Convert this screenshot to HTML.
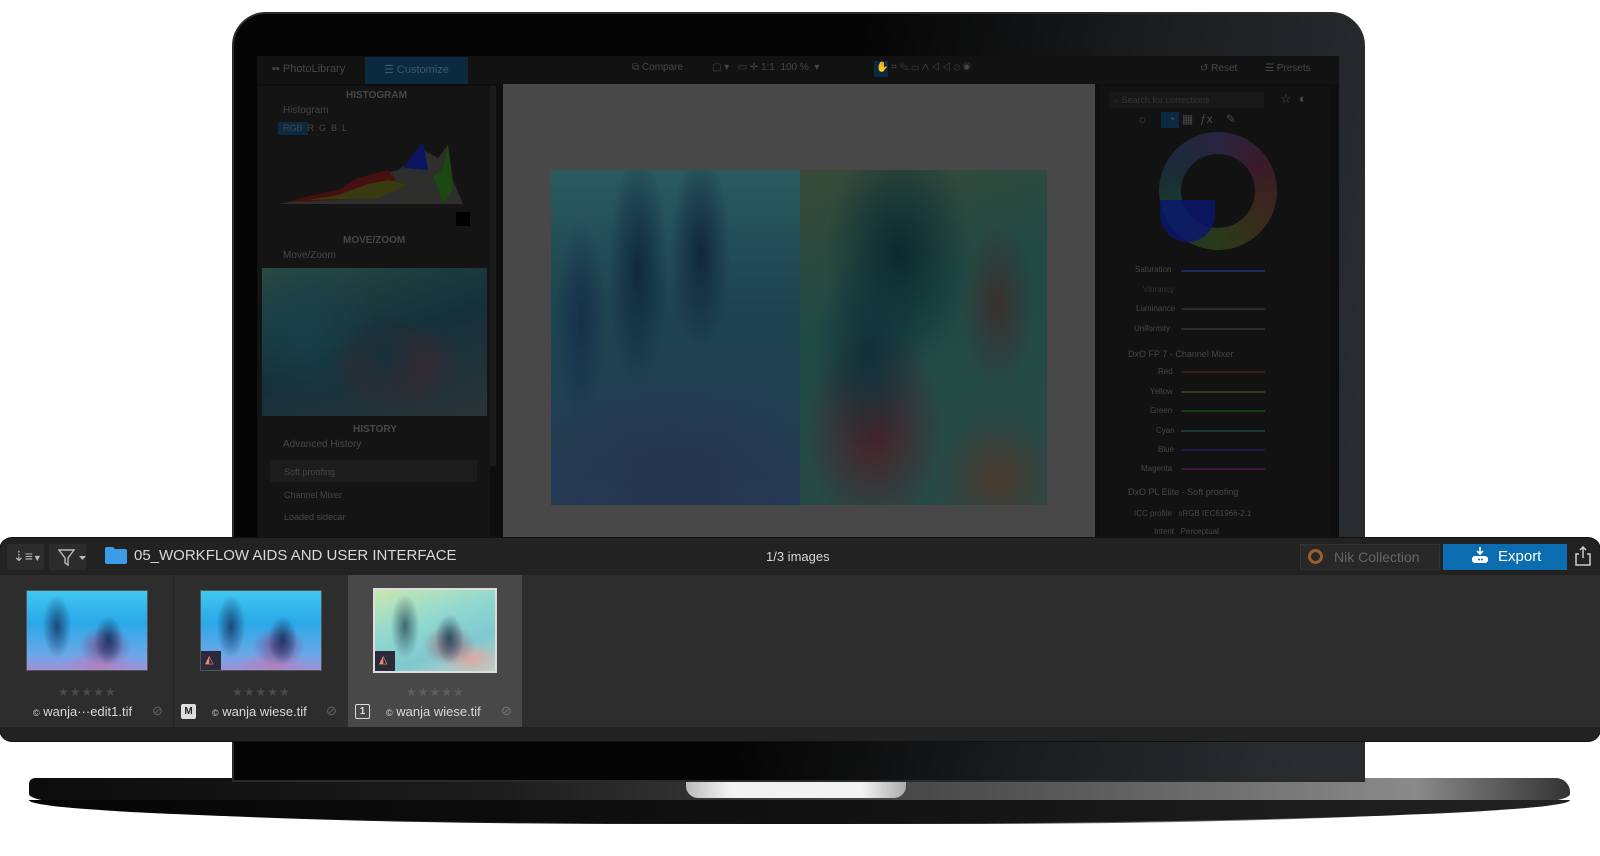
<!DOCTYPE html>
<html><head><meta charset="utf-8"><style>
*{margin:0;padding:0;box-sizing:border-box}
body{width:1600px;height:856px;background:#fff;position:relative;overflow:hidden;font-family:"Liberation Sans",sans-serif}
.abs{position:absolute}
.t{position:absolute;color:#474747;font-size:10px;white-space:nowrap}
</style></head><body>

<!-- base -->
<div class="abs" style="left:29px;top:778px;width:1541px;height:46px;border-radius:6px 14px 40% 40%/6px 14px 30px 30px;background:linear-gradient(90deg,#0c0c0c 0%,#1c1c1c 30%,#555 65%,#8a8a8a 90%,#333 100%)"></div>
<div class="abs" style="left:29px;top:800px;width:1541px;height:24px;border-radius:0 0 50% 50%/0 0 24px 24px;background:linear-gradient(90deg,#050505,#111 50%,#222)"></div>
<div class="abs" style="left:686px;top:778px;width:220px;height:20px;border-radius:0 0 12px 12px;background:linear-gradient(90deg,#bbb,#f2f2f2 20%,#f2f2f2 80%,#aaa)"></div>

<!-- lid -->
<div class="abs" style="left:232px;top:12px;width:1133px;height:770px;border-radius:34px 34px 0 0;background:linear-gradient(100deg,#050505 50%,#1c1e20 75%,#2a2d30 95%);border:2px solid #2a2a2a"></div>
<div class="abs" style="left:257px;top:56px;width:1082px;height:484px;background:#0e0e0e"></div>

<!-- toolbar -->
<div class="abs" style="left:257px;top:56px;width:1082px;height:28px;background:#121212"></div>
<div class="abs" style="left:365px;top:57px;width:103px;height:27px;background:#0b2a40"></div>
<div class="t" style="left:272px;top:63px;font-size:11px">▪▪ PhotoLibrary</div>
<div class="t" style="left:384px;top:63px;font-size:11px;color:#3c5a70">☰ Customize</div>
<div class="t" style="left:632px;top:62px">⧉ Compare</div>
<div class="t" style="left:712px;top:62px">▢ ▾ &nbsp; ▭ ✛ 1:1 &nbsp;100 % &nbsp;▾</div>
<div class="abs" style="left:874px;top:61px;width:14px;height:16px;background:#0b2a40"></div>
<div class="t" style="left:876px;top:62px">✋ ⌗ ✎ ▭ ⋀ ◁ ◁ ⊘ ◉</div>
<div class="t" style="left:1200px;top:63px">↺ Reset</div>
<div class="t" style="left:1265px;top:63px">☰ Presets</div>

<!-- left panel -->
<div class="abs" style="left:258px;top:86px;width:232px;height:454px;background:#141414"></div>
<div class="abs" style="left:490px;top:86px;width:6px;height:380px;background:#1b1b1b"></div>
<div class="t" style="left:346px;top:90px;font-weight:bold">HISTOGRAM</div>
<div class="t" style="left:283px;top:105px">Histogram</div>
<div class="abs" style="left:278px;top:122px;width:30px;height:13px;background:#0b2a40"></div>
<div class="t" style="left:283px;top:123px;font-size:9px">RGB &nbsp;R &nbsp;G &nbsp;B &nbsp;L</div>
<svg class="abs" style="left:278px;top:140px" width="190" height="65"><polygon points="0,64 30,58 60,52 80,40 100,35 120,30 135,20 145,10 160,18 170,5 175,40 185,64" fill="#2e2e2c"/><polygon points="10,62 30,56 60,50 80,38 95,34 110,30 118,40 60,60" fill="#451010"/><polygon points="30,60 60,55 90,44 110,40 130,45 100,58" fill="#3a3a10"/><polygon points="125,28 135,15 145,2 150,30" fill="#0a1460"/><polygon points="155,35 165,30 170,5 175,50 165,62" fill="#1a4a10"/></svg>
<div class="abs" style="left:456px;top:212px;width:14px;height:14px;background:#000"></div>
<div class="t" style="left:343px;top:235px;font-weight:bold">MOVE/ZOOM</div>
<div class="t" style="left:283px;top:250px">Move/Zoom</div>
<div class="abs" style="left:262px;top:268px;width:225px;height:148px;background:radial-gradient(ellipse 18% 30% at 55% 60%,#15303a,transparent),radial-gradient(ellipse 30% 30% at 60% 65%,#40252c,transparent),radial-gradient(ellipse 30% 50% at 20% 40%,#18404a,transparent),linear-gradient(160deg,#2a4a44,#14303a 50%,#2a3438)"></div>
<div class="t" style="left:353px;top:424px;font-weight:bold">HISTORY</div>
<div class="t" style="left:283px;top:439px">Advanced History</div>
<div class="abs" style="left:270px;top:460px;width:207px;height:22px;background:#1c1c1c"></div>
<div class="t" style="left:284px;top:467px;font-size:9px">Soft proofing</div>
<div class="t" style="left:284px;top:490px;font-size:9px">Channel Mixer</div>
<div class="t" style="left:284px;top:512px;font-size:9px">Loaded sidecar</div>

<!-- center -->
<div class="abs" style="left:503px;top:84px;width:592px;height:456px;background:#484848"></div>
<div class="abs" style="left:551px;top:170px;width:249px;height:335px;background:radial-gradient(ellipse 12% 35% at 35% 30%,#0f2a3a,transparent),radial-gradient(ellipse 12% 30% at 60% 25%,#10283a,transparent),radial-gradient(ellipse 10% 30% at 12% 45%,#15304a,transparent),radial-gradient(ellipse 60% 30% at 50% 90%,#28344e,transparent),linear-gradient(180deg,#2a5a60,#1e4450 40%,#243a55)"></div>
<div class="abs" style="left:800px;top:170px;width:247px;height:335px;background:radial-gradient(ellipse 22% 30% at 28% 55%,#10303a,transparent),radial-gradient(ellipse 28% 30% at 30% 78%,#4a2028,transparent),radial-gradient(ellipse 25% 20% at 80% 92%,#4a3a30,transparent),radial-gradient(ellipse 30% 35% at 40% 25%,#0a2a30,transparent),radial-gradient(ellipse 15% 25% at 80% 40%,#3a3030,transparent),linear-gradient(160deg,#3a4a38,#204a44 40%,#2a4a48)"></div>

<!-- right panel -->
<div class="abs" style="left:1100px;top:86px;width:230px;height:454px;background:#121212"></div>
<div class="abs" style="left:1109px;top:92px;width:155px;height:16px;background:#181818"></div>
<div class="t" style="left:1114px;top:95px;font-size:9px;color:#333">⌕ Search for corrections</div>
<div class="t" style="left:1280px;top:91px;font-size:13px">☆ &nbsp;◐</div>
<div class="abs" style="left:1161px;top:112px;width:18px;height:16px;background:#0b2a40"></div>
<div class="t" style="left:1137px;top:112px;font-size:12px">☼ &nbsp; &nbsp; &nbsp;◔ &nbsp;▦ &nbsp;ƒx &nbsp; &nbsp;✎</div>
<div class="abs" style="left:1159px;top:132px;width:118px;height:118px;border-radius:50%;background:conic-gradient(#2a2440,#3a1a2a,#3a2a1a,#2a3a1a,#1a3a2a,#1a2a3a,#2a2440)"></div>
<div class="abs" style="left:1181px;top:154px;width:74px;height:74px;border-radius:50%;background:#121212"></div>
<div class="abs" style="left:1160px;top:200px;width:55px;height:42px;border-radius:0 0 40px 40px;background:#0a1670;opacity:.8"></div>
<div class="t" style="left:1135px;top:265px;font-size:8px">Saturation</div>
<div class="abs" style="left:1181px;top:270px;width:84px;height:2px;background:#1a2a5a"></div>
<div class="t" style="left:1143px;top:285px;font-size:8px;color:#333">Vibrancy</div>
<div class="t" style="left:1136px;top:304px;font-size:8px">Luminance</div>
<div class="abs" style="left:1181px;top:308px;width:84px;height:2px;background:#2a2a2a"></div>
<div class="t" style="left:1134px;top:324px;font-size:8px">Uniformity</div>
<div class="abs" style="left:1181px;top:328px;width:84px;height:2px;background:#2a2a2a"></div>
<div class="t" style="left:1128px;top:349px;font-size:9px">DxO FP 7 - Channel Mixer</div>
<div class="t" style="left:1158px;top:367px;font-size:8px">Red</div>
<div class="abs" style="left:1181px;top:371px;width:84px;height:2px;background:#3a1a1a"></div>
<div class="t" style="left:1150px;top:387px;font-size:8px">Yellow</div>
<div class="abs" style="left:1181px;top:391px;width:84px;height:2px;background:#3a3a1a"></div>
<div class="t" style="left:1150px;top:406px;font-size:8px">Green</div>
<div class="abs" style="left:1181px;top:410px;width:84px;height:2px;background:#1a3a1a"></div>
<div class="t" style="left:1156px;top:426px;font-size:8px">Cyan</div>
<div class="abs" style="left:1181px;top:430px;width:84px;height:2px;background:#1a3a3a"></div>
<div class="t" style="left:1158px;top:445px;font-size:8px">Blue</div>
<div class="abs" style="left:1181px;top:449px;width:84px;height:2px;background:#1a1a4a"></div>
<div class="t" style="left:1141px;top:464px;font-size:8px">Magenta</div>
<div class="abs" style="left:1181px;top:468px;width:84px;height:2px;background:#3a1a3a"></div>
<div class="t" style="left:1128px;top:487px;font-size:9px">DxO PL Elite - Soft proofing</div>
<div class="t" style="left:1134px;top:509px;font-size:8px">ICC profile &nbsp; sRGB IEC61966-2.1</div>
<div class="t" style="left:1154px;top:527px;font-size:8px">Intent &nbsp; Perceptual</div>

<!-- filmstrip -->
<div class="abs" style="left:0;top:538px;width:1600px;height:203px;border-radius:12px;background:#222;box-shadow:0 0 0 1px #111"></div>
<div class="abs" style="left:0;top:575px;width:1600px;height:152px;background:#2d2d2d"></div>
<div class="abs" style="left:7px;top:544px;width:37px;height:26px;background:#2c2c2c;border-radius:2px"></div>
<div class="abs" style="left:49px;top:544px;width:37px;height:26px;background:#2c2c2c;border-radius:2px"></div>
<div class="t" style="left:13px;top:548px;color:#bbb;font-size:14px">⇣≡<span style="font-size:9px">▼</span></div>
<svg class="abs" style="left:58px;top:549px" width="30" height="17"><path d="M1 1h15l-6 8v7l-3-2v-5z" fill="none" stroke="#bbb" stroke-width="1.4"/><path d="M21 7h7l-3.5 4z" fill="#bbb"/></svg>
<svg class="abs" style="left:105px;top:547px" width="22" height="17"><path d="M0 2q0-2 2-2h6l2 2h10q2 0 2 2v11q0 2-2 2H2q-2 0-2-2z" fill="#3a9ee6"/></svg>
<div class="t" style="left:134px;top:547px;font-size:15px;color:#d8d8d8">05_WORKFLOW AIDS AND USER INTERFACE</div>
<div class="t" style="left:766px;top:549px;font-size:13px;color:#d8d8d8">1/3 images</div>
<div class="abs" style="left:1300px;top:544px;width:140px;height:26px;background:#282828;border:1px solid #333"></div>
<div class="abs" style="left:1308px;top:549px;width:15px;height:15px;border-radius:50%;border:3px solid #9a5e2c"></div>
<div class="t" style="left:1334px;top:549px;font-size:14px;color:#666">Nik Collection</div>
<div class="abs" style="left:1443px;top:544px;width:124px;height:26px;background:#0b6db0"></div>
<svg class="abs" style="left:1470px;top:546px" width="20" height="20"><path d="M10 1v7M7 5l3 3 3-3" stroke="#fff" stroke-width="1.6" fill="none"/><rect x="2" y="10" width="16" height="7" rx="3" fill="#fff"/><circle cx="9" cy="13.5" r="1" fill="#0b6db0"/><circle cx="12" cy="13.5" r="1" fill="#0b6db0"/></svg>
<div class="t" style="left:1498px;top:548px;font-size:15px;color:#fff">Export</div>
<svg class="abs" style="left:1574px;top:546px" width="18" height="20"><path d="M9 1v11M6 4l3-3 3 3M5 8H2v11h14V8h-3" stroke="#ccc" stroke-width="1.5" fill="none"/></svg>

<!-- cells -->
<div class="abs" style="left:173px;top:575px;width:1px;height:152px;background:#222"></div>
<div class="abs" style="left:348px;top:575px;width:174px;height:152px;background:#484848"></div>
<div class="abs" style="left:26px;top:590px;width:122px;height:81px;border:1px solid #555;background:radial-gradient(ellipse 12% 30% at 68% 62%,#1a3a6a,transparent),radial-gradient(ellipse 22% 25% at 65% 70%,#7a4a8a,transparent),radial-gradient(ellipse 12% 40% at 25% 45%,#1a4a7a,transparent),radial-gradient(ellipse 30% 20% at 60% 95%,#b080c0,transparent),linear-gradient(180deg,#40c8f0,#2aa8e8 40%,#6aa8e8 80%,#a090d8)"></div>
<div class="abs" style="left:200px;top:590px;width:122px;height:81px;border:1px solid #555;background:radial-gradient(ellipse 12% 30% at 68% 62%,#1a3a6a,transparent),radial-gradient(ellipse 22% 25% at 65% 70%,#7a4a8a,transparent),radial-gradient(ellipse 12% 40% at 25% 45%,#1a4a7a,transparent),radial-gradient(ellipse 30% 20% at 60% 95%,#b080c0,transparent),linear-gradient(180deg,#40c8f0,#2aa8e8 40%,#6aa8e8 80%,#a090d8)"></div>
<div class="abs" style="left:373px;top:588px;width:124px;height:85px;border:2px solid #ddd;background:radial-gradient(ellipse 12% 30% at 62% 60%,#2a5060,transparent),radial-gradient(ellipse 22% 25% at 62% 68%,#a07080,transparent),radial-gradient(ellipse 12% 40% at 25% 45%,#406a70,transparent),radial-gradient(ellipse 25% 20% at 80% 85%,#e0a8a0,transparent),linear-gradient(160deg,#c8e8b0,#90d8d0 40%,#80c8d0 70%,#c0d0c8)"></div>
<div class="abs" style="left:201px;top:651px;width:20px;height:19px;background:#2a2a3a"></div>
<div class="abs" style="left:375px;top:651px;width:20px;height:20px;background:#2a2a3a"></div>
<div class="t" style="left:205px;top:653px;font-size:11px;color:#e87">◭</div>
<div class="t" style="left:379px;top:653px;font-size:11px;color:#e87">◭</div>
<div class="t" style="left:58px;top:685px;font-size:12px;color:#4a4a4a;letter-spacing:1px">★★★★★</div>
<div class="t" style="left:232px;top:685px;font-size:12px;color:#4a4a4a;letter-spacing:1px">★★★★★</div>
<div class="t" style="left:406px;top:685px;font-size:12px;color:#5e5e5e;letter-spacing:1px">★★★★★</div>
<div class="t" style="left:33px;top:704px;font-size:13px;color:#d8d8d8"><span style="font-size:9px">©</span> wanja···edit1.tif</div>
<div class="t" style="left:212px;top:704px;font-size:13px;color:#d8d8d8"><span style="font-size:9px">©</span> wanja wiese.tif</div>
<div class="t" style="left:386px;top:704px;font-size:13px;color:#d8d8d8"><span style="font-size:9px">©</span> wanja wiese.tif</div>
<div class="t" style="left:152px;top:703px;font-size:13px;color:#666">⊘</div>
<div class="t" style="left:326px;top:703px;font-size:13px;color:#666">⊘</div>
<div class="t" style="left:501px;top:703px;font-size:13px;color:#777">⊘</div>
<div class="abs" style="left:181px;top:704px;width:15px;height:15px;background:#ddd;border-radius:2px;color:#222;font-size:10px;font-weight:bold;text-align:center;line-height:15px">M</div>
<div class="abs" style="left:355px;top:704px;width:15px;height:15px;border:1px solid #ddd;border-radius:2px;color:#ddd;font-size:10px;font-weight:bold;text-align:center;line-height:13px">1</div>
</body></html>
